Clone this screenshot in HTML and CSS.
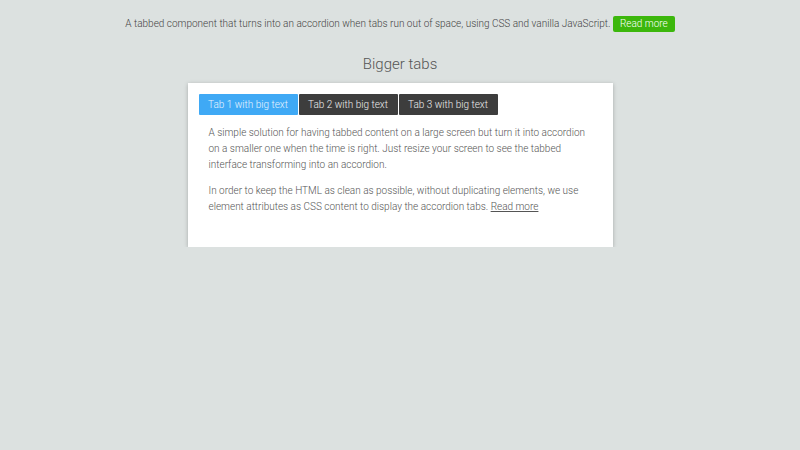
FILE: index.html
```html
<!DOCTYPE html>
<html>
<head>
    <title>Bigger tabs</title>
    <link rel="stylesheet" href="styles.css">
</head>
<body>
    <p class="intro">A tabbed component that turns into an accordion when tabs run out of space, using CSS and vanilla JavaScript. <a href="#" class="button">Read more</a></p>

    <h2>Bigger tabs</h2>
    <div class="card">
        <div class="tabs">
            <button class="tab active">Tab 1 with big text</button>
            <button class="tab">Tab 2 with big text</button>
            <button class="tab">Tab 3 with big text</button>
        </div>
        <div class="panel">
            <p>A simple solution for having tabbed content on a large screen but turn it into accordion on a smaller one when the time is right. Just resize your screen to see the tabbed interface transforming into an accordion.</p>
            <p>In order to keep the HTML as clean as possible, without duplicating elements, we use element attributes as CSS content to display the accordion tabs. <a href="#">Read more</a></p>
        </div>
    </div>
</body>
</html>
```

FILE: styles.css
```css
body {
    font-family: Roboto, "Liberation Sans", sans-serif;
    font-weight: 300;
    background-color: #dce1e0;
    color: #555;
    margin: 0;
    padding: 0;
}
.intro {
    text-align: center;
    font-size: 10px;
    color: #444;
    margin: 16px 0 0;
    line-height: 16px;
}
.button {
    display: inline-block;
    padding: 0 7px;
    line-height: 16px;
    background-color: #3cb70c;
    color: #fff;
    text-decoration: none;
    border-radius: 2px;
}
h2 {
    text-align: center;
    font-weight: 300;
    font-size: 15px;
    color: #555;
    margin: 22px 0 0;
    line-height: 20px;
}
.card {
    width: 403px;
    margin: 9px auto 0;
    padding: 11px 11px 22px;
    background-color: #fff;
    box-shadow: 0 1px 4px rgba(0, 0, 0, 0.25);
}
.tabs {
    display: flex;
    gap: 1px;
}
.tab {
    width: 99px;
    height: 21px;
    padding: 0;
    border: none;
    border-radius: 1px;
    font-family: inherit;
    font-weight: 300;
    font-size: 10px;
    background-color: #3d3d3d;
    color: #eee;
}
.tab.active {
    background-color: #3fa9f5;
    color: #e8f4ff;
}
.panel {
    padding: 0 10px;
    font-size: 10px;
    line-height: 16px;
    margin-top: 10px;
}
.panel p {
    margin: 0 0 10px;
}
.panel a {
    color: #555;
}
```
